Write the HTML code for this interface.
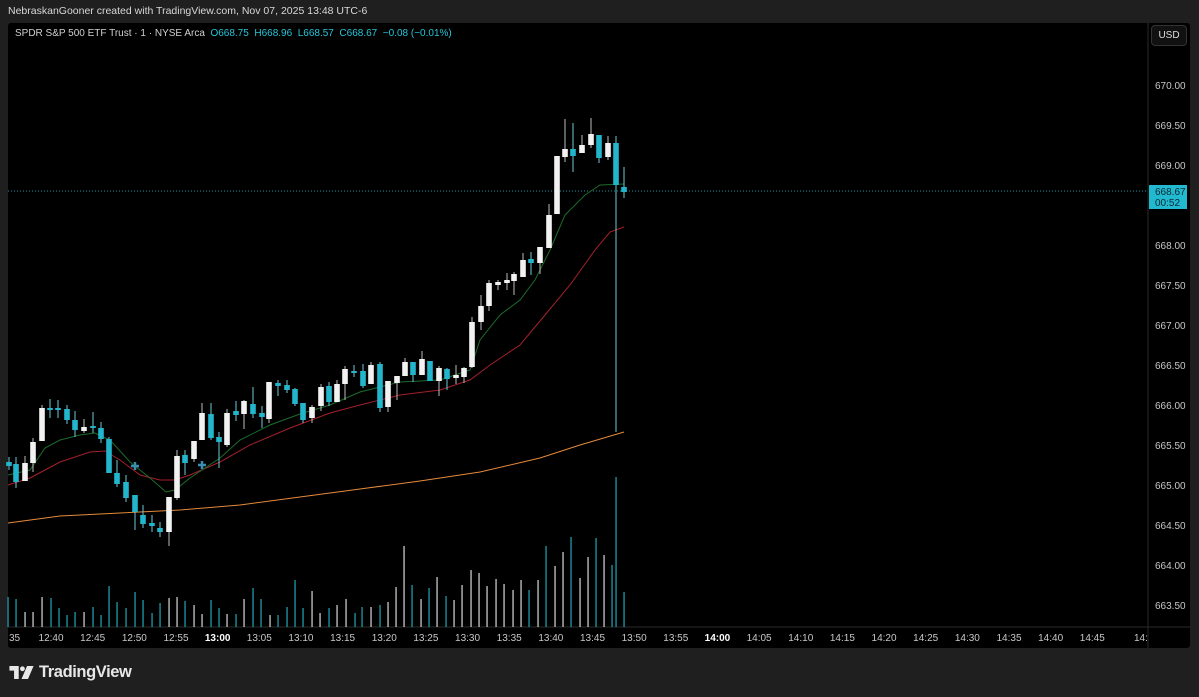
<!DOCTYPE html>
<html><head><meta charset="utf-8"><style>
html,body{margin:0;padding:0;background:#1f1f1f;width:1199px;height:697px;overflow:hidden;font-family:"Liberation Sans",sans-serif}
#hdr{position:absolute;left:8px;top:5px;font-size:10.5px;color:#d8d8d8}
#box{position:absolute;left:8px;top:23px;width:1182px;height:625px;background:#000;border-radius:3px;overflow:hidden}
#leg{position:absolute;left:15px;top:28px;font-size:10px;color:#d0d0d0;white-space:pre}
#leg span{color:#26c6da}
#usd{position:absolute;left:1151px;top:25px;width:34px;height:19px;border:1px solid #333;border-radius:4px;background:#111;color:#ddd;font-size:10px;text-align:center;line-height:19px}
#logo{position:absolute;left:39px;top:663px;font-size:16.5px;font-weight:bold;color:#e8e8e8;letter-spacing:-0.4px}
</style></head><body>
<div id="hdr">NebraskanGooner created with TradingView.com, Nov 07, 2025 13:48 UTC-6</div>
<div id="box"></div>
<svg id="s" width="1199" height="697" style="position:absolute;left:0;top:0"></svg>
<div id="leg">SPDR S&amp;P 500 ETF Trust · 1 · NYSE Arca  <span>O668.75  H668.96  L668.57  C668.67  −0.08 (−0.01%)</span></div>
<div id="usd">USD</div>
<svg style="position:absolute;left:9px;top:666px" width="25" height="13" viewBox="0 0 26 14"><path d="M0 0H10V14H5V5H0Z" fill="#e8e8e8"/><circle cx="14" cy="3" r="2.6" fill="#e8e8e8"/><path d="M19 0H26L20 14H13Z" fill="#e8e8e8"/></svg>
<div id="logo">TradingView</div>
<script>
var s=document.getElementById('s'),h='';
var C='#22b5cc',W='#f2f2f2';
for(var p=670;p>=663.5;p-=0.5){var y=85+(670-p)*80;h+='<text x="1155" y="'+(y+4)+'" fill="#c8c8c8" font-size="10" font-family="Liberation Sans">'+p.toFixed(2)+'</text>';}
h+='<line x1="1148" y1="23" x2="1148" y2="648" stroke="#2a2a2a"/>';
h+='<line x1="8" y1="627" x2="1190" y2="627" stroke="#2a2a2a"/>';
var tl=['35','12:40','12:45','12:50','12:55','13:00','13:05','13:10','13:15','13:20','13:25','13:30','13:35','13:40','13:45','13:50','13:55','14:00','14:05','14:10','14:15','14:20','14:25','14:30','14:35','14:40','14:45','14:'];
for(var i=0;i<tl.length;i++){var x=9.4+i*41.65;var b=(tl[i]=='13:00'||tl[i]=='14:00');
 if(i==0)h+='<text x="9" y="641" fill="#c8c8c8" font-size="10">35</text>';
 else if(i==tl.length-1)h+='<text x="1134" y="641" fill="#c8c8c8" font-size="10">14:</text>';
 else h+='<text x="'+x+'" y="641" text-anchor="middle" fill="'+(b?'#fff':'#c8c8c8')+'" font-size="10" '+(b?'font-weight="bold"':'')+'>'+tl[i]+'</text>';}
h+='<line x1="8" y1="191" x2="1148" y2="191" stroke="#26c6da" stroke-dasharray="1,2" stroke-width="0.8"/>';
var vol=[[8,597,1],[16,599,1],[25,612,0],[33,612,0],[42,597,0],[51,598,1],[59,608,1],[67,615,1],[75,612,1],[84,612,0],[93,607,1],[101,615,1],[109,586,1],[117,602,1],[126,608,1],[135,592,1],[143,600,1],[152,613,1],[160,603,1],[169,598,0],[177,597,0],[185,601,1],[194,605,0],[202,614,0],[211,600,1],[219,608,1],[227,614,0],[236,614,1],[244,599,0],[253,588,1],[261,599,1],[270,615,0],[278,615,1],[287,607,1],[295,580,1],[303,608,1],[312,591,0],[320,613,0],[329,608,1],[337,605,0],[346,599,0],[355,613,1],[362,607,1],[371,607,0],[380,605,1],[388,602,0],[396,587,0],[404,546,0],[412,585,1],[421,599,0],[429,588,1],[437,577,0],[446,596,1],[454,600,0],[462,585,0],[471,570,0],[479,573,0],[487,586,0],[496,579,0],[504,584,0],[513,590,0],[521,580,0],[529,590,1],[538,580,0],[546,546,1],[555,566,0],[563,552,0],[571,537,1],[580,578,0],[588,557,0],[596,538,1],[604,555,0],[612,565,1],[616,477,1],[624,592,1]];
vol.forEach(function(v){h+='<rect x="'+(v[0]-0.6)+'" y="'+v[1]+'" width="1.3" height="'+(627-v[1])+'" fill="'+(v[2]?'#1e9aa8':'#c8c8c8')+'"/>';});
function pl(pts,c){h+='<polyline fill="none" stroke="'+c+'" stroke-width="1" points="'+pts.map(function(p){return p.join(',')}).join(' ')+'"/>';}
pl([[8,523],[60,516],[120,513],[180,510],[240,505],[300,497],[360,489],[420,481],[480,472],[540,458],[580,445],[624,432]],'#e58a3c');
pl([[8,485],[30,478],[60,462],[90,452],[105,451],[120,460],[140,475],[160,480],[175,480],[190,475],[220,462],[250,445],[290,428],[330,413],[360,405],[400,395],[440,390],[470,380],[490,365],[520,345],[545,315],[570,285],[595,250],[610,232],[624,227]],'#a3202a');
pl([[8,475],[30,470],[45,448],[60,440],[80,435],[95,433],[110,440],[130,462],[150,478],[166,492],[175,490],[190,478],[205,468],[220,458],[240,440],[270,425],[300,414],[330,405],[360,392],[400,382],[440,380],[470,370],[480,340],[500,315],[520,300],[535,280],[550,250],[565,215],[585,195],[600,185],[624,184]],'#1d6b2c');
var cd=[[9,462,466,457,470,1],[16,464,482,457,488,1],[25,463,481,456,481,0],[33,442,463,438,472,0],[42,408,441,405,441,0],[50,408,410,399,418,1],[58,408,410,400,418,1],[67,409,420,405,424,1],[75,420,430,411,437,1],[84,427,431,419,433,0],[93,426,428,412,433,1],[101,428,439,422,443,1],[109,439,473,437,473,1],[117,473,484,460,487,1],[126,482,498,475,502,1],[135,495,512,495,530,1],[143,515,524,505,528,1],[152,523,526,515,532,1],[160,528,532,522,537,1],[169,497,532,497,546,0],[177,456,498,450,500,0],[185,455,463,450,475,1],[194,441,459,441,462,0],[202,413,440,403,440,0],[211,414,438,403,440,1],[219,437,442,432,468,1],[227,413,445,409,447,0],[236,411,415,401,421,1],[244,401,414,400,429,0],[253,404,414,387,418,1],[262,413,417,406,428,1],[269,382,419,382,423,0],[278,383,386,380,396,1],[287,385,390,380,393,1],[295,389,404,388,406,1],[303,403,420,403,423,1],[312,407,418,405,423,0],[321,387,406,384,411,0],[329,386,402,382,406,1],[337,384,402,380,402,0],[345,369,384,366,400,0],[354,371,373,365,377,1],[363,371,386,364,388,1],[371,365,384,362,384,0],[380,364,408,362,412,1],[388,381,407,381,412,0],[397,376,383,376,400,0],[405,362,376,358,376,0],[413,362,375,362,382,1],[422,359,375,351,375,0],[430,361,381,361,381,1],[439,368,381,366,396,0],[447,369,379,368,390,1],[456,375,378,365,384,0],[464,368,377,367,383,0],[472,322,367,317,368,0],[481,306,322,295,330,0],[489,283,306,280,311,0],[498,282,285,280,290,0],[507,280,283,273,290,0],[514,274,281,272,295,0],[523,260,277,253,277,0],[531,259,263,252,275,1],[540,247,263,247,274,0],[549,215,248,204,248,0],[557,156,214,156,214,0],[565,149,157,119,162,0],[573,149,156,123,172,1],[582,145,153,135,153,0],[591,134,145,118,148,0],[599,135,158,135,163,1],[608,143,157,136,160,0],[616,143,185,136,432,1],[624,187,192,167,198,1]];
cd.forEach(function(c){var col=c[5]?C:W;h+='<line x1="'+c[0]+'" y1="'+c[3]+'" x2="'+c[0]+'" y2="'+c[4]+'" stroke="'+(c[5]?'#6fc9d6':'#bbb')+'" stroke-width="1"/>';h+='<rect x="'+(c[0]-2.8)+'" y="'+c[1]+'" width="5.6" height="'+Math.max(1.5,c[2]-c[1])+'" fill="'+col+'"/>';});
[[135,466],[202,465]].forEach(function(p){h+='<path d="M'+(p[0]-4)+' '+p[1]+'h8M'+p[0]+' '+(p[1]-4)+'v8" stroke="#3a8fb0" stroke-width="2.5"/>';});
h+='<rect x="1149" y="185" width="38" height="24" fill="#22b8d0"/><text x="1155" y="195" fill="#0a2a30" font-size="10">668.67</text><text x="1155" y="206" fill="#0a2a30" font-size="10">00:52</text>';
s.innerHTML=h;
</script>
</body></html>
